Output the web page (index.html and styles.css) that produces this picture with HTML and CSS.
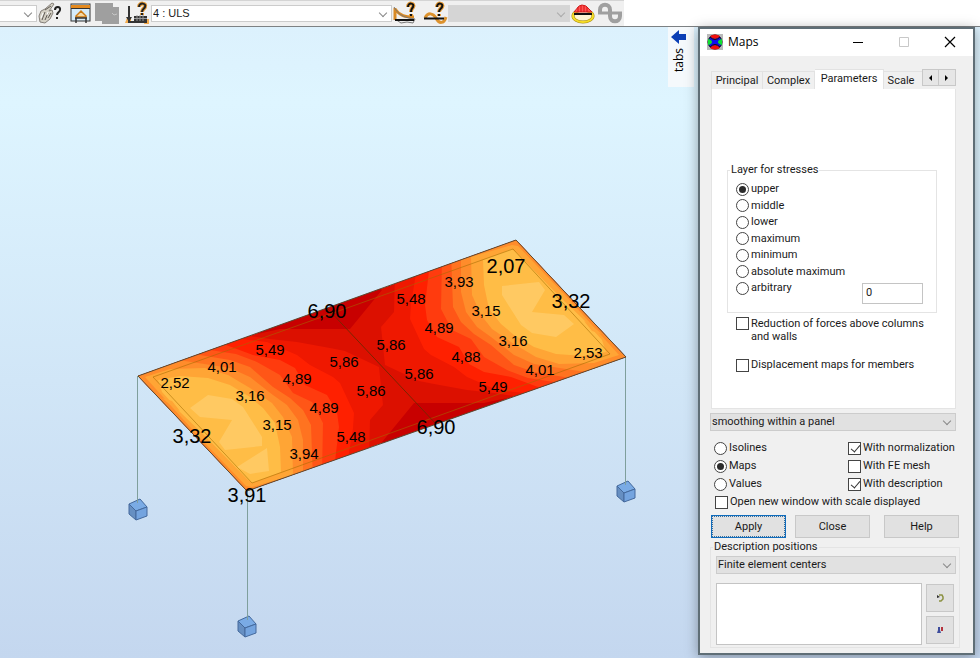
FILE: index.html
```html
<!DOCTYPE html>
<html lang="en">
<head>
    <meta charset="UTF-8">
    <meta name="viewport" content="width=device-width, initial-scale=1.0">
    <title>Maps</title>
    <link rel="stylesheet" href="styles.css">
</head>
<body>
    <header class="toolbar">
        <div class="tools">
            <div class="combo combo-selection">
                <select aria-label="Selection"><option></option></select>
            </div>
            <button class="tool" aria-label="Select objects">
                <svg width="26" height="24" viewBox="0 0 26 24">
                    <path d="M3 21 2 15l2-5 4-2 7-6 2 1-5 7 3-1 1 3-3 6-5 4z" fill="#d4d0c4" stroke="#85807a" stroke-width="1"/>
                    <path d="M5 19l3-8M8 19l3-7M11 17l3-5M8 9l6-4" stroke="#5f5a54" fill="none"/>
                    <path d="M4 17l2-5M10 14l1-3" stroke="#fff" fill="none"/>
                    <path d="M18 9c0-4 6-4 5 0 0 2-3 2-3 5M20 16v2" stroke="#222" stroke-width="2" fill="none"/>
                </svg>
            </button>
            <button class="tool" aria-label="View frame">
                <svg width="26" height="24" viewBox="0 0 26 24">
                    <rect x="3" y="3" width="19" height="17" fill="#d5ecfa" stroke="#333"/>
                    <path d="M3 4h19v3H3z" fill="#e58a1f"/>
                    <path d="M3 7.500h19" stroke="#333"/>
                    <path d="M8 16v-1l5-5 5 5v1z" fill="#f3d9a5" stroke="#cc7a14" stroke-width="1.500"/>
                    <path d="M7 17h12M8 17v5M18 17v5" stroke="#333" stroke-width="1.500"/>
                </svg>
            </button>
            <button class="tool" aria-label="Copy view" disabled>
                <svg width="26" height="24" viewBox="0 0 26 24">
                    <path d="M0 2h18v4h6v17H7v-3H0z" fill="#9f9f9f"/>
                    <path d="M17 12l2 2 3-1" stroke="#c5c5c5" fill="none"/>
                </svg>
            </button>
            <button class="tool tool-load" aria-label="Load case">
                <svg width="26" height="24" viewBox="0 0 26 24">
                    <path d="M2 17h4v5H0zM20 18h4v5h-5z" fill="#f3ab4b"/>
                    <path d="M4 5v15" stroke="#333" stroke-width="2"/>
                    <path d="M1 16l3 5 3-5z" fill="#333"/>
                    <path d="M3 21h19" stroke="#333" stroke-width="2"/>
                    <path d="M9 15h13v6H9z" fill="#333"/>
                    <path d="M9 17.500h13M12 14v6M15 14v6M18 14v6" stroke="#999"/>
                    <path d="M14 6c0-5 8-4 6 0-1 2-3 2-3 5M17 12v2" stroke="#e49a36" stroke-width="4" fill="none"/>
                    <path d="M14 6c0-5 8-4 6 0-1 2-3 2-3 5M17 12v2" stroke="#222" stroke-width="2" fill="none"/>
                </svg>
            </button>
            <div class="combo combo-case">
                <select aria-label="Load case"><option>4 : ULS</option></select>
            </div>
            <button class="tool" aria-label="Mode">
                <svg width="26" height="24" viewBox="0 0 26 24">
                    <path d="M3 7v12M3 8c5 7 10 8 19 8" stroke="#d98a25" stroke-width="3" fill="none"/>
                    <path d="M2 6c5 9 12 11 21 12M3 18l6 4 6-1 6 1 2-4" stroke="#777" fill="none"/>
                    <path d="M3 19h19" stroke="#111" stroke-width="2"/>
                    <path d="M16 6c0-5 7-4 5 0-1 2-2 2-2 5M19 13v2" stroke="#e49a36" stroke-width="4" fill="none"/>
                    <path d="M16 6c0-5 7-4 5 0-1 2-2 2-2 5M19 13v2" stroke="#111" stroke-width="2" fill="none"/>
                </svg>
            </button>
            <button class="tool tool-mode" aria-label="Mode shape">
                <svg width="26" height="24" viewBox="0 0 26 24">
                    <path d="M3 17c3-6 8-5 11 0 3 6 8 6 10-1" stroke="#dc922e" stroke-width="3" fill="none"/>
                    <path d="M2 17.500h20" stroke="#111" stroke-width="2"/>
                    <path d="M15 6c0-5 7-4 5 0-1 2-3 2-3 5M17 13v2" stroke="#e49a36" stroke-width="4" fill="none"/>
                    <path d="M15 6c0-5 7-4 5 0-1 2-3 2-3 5M17 13v2" stroke="#111" stroke-width="2" fill="none"/>
                </svg>
            </button>
            <div class="combo combo-mode">
                <select aria-label="Mode number" disabled><option></option></select>
            </div>
            <button class="tool" aria-label="Diagrams">
                <svg width="26" height="24" viewBox="0 0 26 24">
                    <ellipse cx="13" cy="15" rx="10" ry="6" fill="#fff6d5" stroke="#a48910" stroke-width="3"/>
                    <ellipse cx="13" cy="15" rx="10" ry="6" fill="none" stroke="#f5dc28" stroke-width="2"/>
                    <path d="M4 11l5-6 3-1 4 1 6 6z" fill="#f55" stroke="#c22"/>
                    <path d="M8 6v5M11 4v7M14 4v7M17 6v5" stroke="#d11"/>
                    <path d="M4 13h18" stroke="#111" stroke-width="2"/>
                </svg>
            </button>
            <button class="tool" aria-label="Deformation" disabled>
                <svg width="26" height="24" viewBox="0 0 26 24">
                    <path d="M3 12V9c0-7 10-7 10 0v6c0 7 10 7 10 0v-3" stroke="#9f9f9f" stroke-width="4" fill="none"/>
                    <path d="M1 12h10M15 12h10" stroke="#9f9f9f" stroke-width="3"/>
                </svg>
            </button>
        </div>
    </header>

    <main class="workspace">
        <svg class="model" viewBox="0 27 694 631" role="img" aria-label="Slab stress map">
            <defs>
                <clipPath id="slab"><path d="M138 376 516 240 626 357 247 491z"/></clipPath>
                <!-- one half of the stress map, the other half is the same turned by 180 degrees -->
                <g id="half">
                    <path fill="#c80000" d="M257 334 280 329 350 329 382 290 370 280z"/>
                    <path fill="#ef1800" d="M240 330 250 336 270 339 297 342 330 348 345 351 379 367 383 405 370 420 369 460 247 510 110 376z"/>
                    <path fill="#ff2000" d="M225 335 240 339 267 342 297 355 310 365 333 377 340 383 354 413 353 428 347 465 247 510 110 376z"/>
                    <path fill="#ff3b0e" d="M212 340 226 345 253 355 280 360 295 368 305 385 327 395 337 412 339 427 334 470 247 510 110 376z"/>
                    <path fill="#ff5617" d="M198 344 210 350 236 354 257 362 280 375 293 393 312 402 323 423 322 475 247 510 110 376z"/>
                    <path fill="#ff7320" d="M182 350 200 355 230 360 250 367 273 387 290 398 303 410 311 425 313 480 247 510 110 376z"/>
                    <path fill="#ff8c2b" d="M160 360 185 361 230 368 250 377 273 395 287 405 298 420 303 440 303 480 247 510 110 376z"/>
                    <path fill="#ffa535" d="M145 377 170 369 205 368 228 375 250 388 272 403 283 417 292 437 293 475 252 487 246 486 200 438z"/>
                    <path fill="#ffbd46" d="M158 380 180 376 208 378 230 385 250 397 263 408 275 423 280 447 281 472 252 483 247 479 207 438 180 412 162 392z"/>
                    <path fill="#ffa535" d="M162 398 172 401 180 411 173 407z"/>
                    <path fill="#ffc962" d="M190 408 208 395 232 399 243 407 262 437 262 446 225 450 219 442 232 420 200 417z"/>
                </g>
                <g id="support" stroke="#44699c" stroke-width="1" stroke-linejoin="round">
                    <path fill="#7aabe5" d="M-9-6 2-11 9-3-2 1z"/>
                    <path fill="#668fc2" d="M-9-6-2 1-2 10-9 4z"/>
                    <path fill="#74a4df" d="M-2 1 9-3 9 6-2 10z"/>
                </g>
            </defs>

            <use href="#support" x="138" y="510"/>
            <use href="#support" x="247" y="627"/>
            <use href="#support" x="626" y="492"/>
            <path class="column" d="M137.500 376v127M247.500 491v129M625.500 357v128"/>

            <g clip-path="url(#slab)">
                <path fill="#dc1000" d="M138 376 516 240 626 357 247 491z"/>
                <use href="#half"/>
                <use href="#half" transform="rotate(180 382 366)"/>
                <path fill="#ffc962" d="M237 467 267 448 269 471 250 474z"/>
            </g>
            <path class="outline" d="M138 376 516 240 626 357 247 491z"/>
            <path class="inner" d="M153 377 513 249 610 354 252 483z"/>
            <path class="joint" d="M327 308 436 424"/>

            <g class="extreme">
                <text x="506" y="273">2,07</text>
                <text x="571" y="308">3,32</text>
                <text x="327" y="318">6,90</text>
                <text x="436" y="434">6,90</text>
                <text x="192" y="443">3,32</text>
                <text x="247" y="502">3,91</text>
            </g>
            <g class="value">
                <text x="459" y="287">3,93</text>
                <text x="411" y="304">5,48</text>
                <text x="486" y="316">3,15</text>
                <text x="439" y="333">4,89</text>
                <text x="391" y="350">5,86</text>
                <text x="513" y="346">3,16</text>
                <text x="588" y="358">2,53</text>
                <text x="466" y="362">4,88</text>
                <text x="540" y="375">4,01</text>
                <text x="419" y="379">5,86</text>
                <text x="493" y="392">5,49</text>
                <text x="270" y="355">5,49</text>
                <text x="344" y="367">5,86</text>
                <text x="222" y="372">4,01</text>
                <text x="175" y="388">2,52</text>
                <text x="297" y="384">4,89</text>
                <text x="371" y="396">5,86</text>
                <text x="250" y="401">3,16</text>
                <text x="324" y="413">4,89</text>
                <text x="277" y="430">3,15</text>
                <text x="351" y="442">5,48</text>
                <text x="304" y="459">3,94</text>
            </g>
        </svg>

        <button class="side-tabs">
            <svg width="16" height="14" viewBox="0 0 16 14"><path d="M0 7l8-7v4h7v6H8v4z" fill="#0b3fb5"/></svg>
            <span>tabs</span>
        </button>

        <section class="dialog" aria-label="Maps">
            <div class="titlebar">
                <svg width="16" height="16" viewBox="0 0 16 16">
                    <path d="M0 0h16v16H0z" fill="#b9b9b9"/>
                    <circle cx="8" cy="8" r="7" fill="#1010f0" stroke="#111"/>
                    <path d="M3 2q5-3 10 0-2 3-5 3T3 2zM3 14q5 3 10 0-2-3-5-3t-5 3z" fill="#f01010"/>
                    <path d="M1 5q4 1 4 3t-4 3zM15 5q-4 1-4 3t4 3z" fill="#10e030"/>
                    <path d="M3 3q5 5 10 0M3 13q5-5 10 0" stroke="#111" fill="none"/>
                </svg>
                <h1>Maps</h1>
                <div class="window-buttons">
                    <button aria-label="Minimize"><svg width="12" height="12"><path d="M1 6.500h10" stroke="#000"/></svg></button>
                    <button aria-label="Maximize" disabled><svg width="12" height="12"><path d="M1.500 1.500h9v9h-9z" stroke="#c8c8c8" fill="none"/></svg></button>
                    <button aria-label="Close window"><svg width="12" height="12"><path d="M1 1l10 10M11 1 1 11" stroke="#000" stroke-width="1.200"/></svg></button>
                </div>
            </div>

            <div class="dialog-body">
                <div class="tabs" role="tablist">
                    <button class="tab tab-principal" role="tab">Principal</button>
                    <button class="tab tab-complex" role="tab">Complex</button>
                    <button class="tab active" role="tab" aria-selected="true">Parameters</button>
                    <button class="tab tab-scale" role="tab">Scale</button>
                    <div class="tab-scroll">
                        <button aria-label="Previous tabs"><svg width="4" height="6"><path d="M3 0v6L0 3z"/></svg></button>
                        <button aria-label="Next tabs"><svg width="4" height="6"><path d="M0 0v6l3-3z"/></svg></button>
                    </div>
                </div>

                <div class="pane">
                    <fieldset class="group layers">
                        <legend>Layer for stresses</legend>
                        <div class="layer-content">
                            <div class="layer-list">
                                <label><input type="radio" name="layer" checked>upper</label>
                                <label><input type="radio" name="layer">middle</label>
                                <label><input type="radio" name="layer">lower</label>
                                <label><input type="radio" name="layer">maximum</label>
                                <label><input type="radio" name="layer">minimum</label>
                                <label><input type="radio" name="layer">absolute maximum</label>
                                <label><input type="radio" name="layer">arbitrary</label>
                            </div>
                            <input class="arbitrary" type="text" value="0" aria-label="Arbitrary layer position">
                        </div>
                    </fieldset>
                    <div class="pane-options">
                        <label class="wrapped"><input type="checkbox"><span>Reduction of forces above columns and walls</span></label>
                        <label><input type="checkbox">Displacement maps for members</label>
                    </div>
                </div>

                <div class="combo smoothing">
                    <select aria-label="Smoothing"><option>smoothing within a panel</option></select>
                </div>

                <div class="display-options">
                    <label><input type="radio" name="display">Isolines</label>
                    <label><input type="checkbox" checked>With normalization</label>
                    <label><input type="radio" name="display" checked>Maps</label>
                    <label><input type="checkbox">With FE mesh</label>
                    <label><input type="radio" name="display">Values</label>
                    <label><input type="checkbox" checked>With description</label>
                    <label class="new-window"><input type="checkbox">Open new window with scale displayed</label>
                </div>

                <div class="actions">
                    <button class="btn primary">Apply</button>
                    <button class="btn">Close</button>
                    <button class="btn help">Help</button>
                </div>

                <fieldset class="group positions">
                    <legend>Description positions</legend>
                    <div class="combo">
                        <select aria-label="Description positions"><option>Finite element centers</option></select>
                    </div>
                    <div class="position-row">
                        <textarea aria-label="Positions"></textarea>
                        <div class="position-buttons">
                            <button class="btn" aria-label="Pick point">
                                <svg width="8" height="8"><path d="M1 1l3 2-3 1z" fill="#333"/><path d="M3 1h3l1 2v2L5 7H3" stroke="#8b9141" stroke-width="1.500" fill="none"/></svg>
                            </button>
                            <button class="btn" aria-label="Delete point">
                                <svg width="8" height="8"><path d="M2 1h2v3l1 3H1l1-3z" fill="#3d4c9c"/><path d="M5 1h2v4H5z" fill="#b5323c"/></svg>
                            </button>
                        </div>
                    </div>
                </fieldset>
            </div>
        </section>
    </main>
</body>
</html>
```

FILE: styles.css
```css
* {
    margin: 0;
    padding: 0;
    box-sizing: border-box;
}

body {
    display: flex;
    flex-direction: column;
    min-height: 100vh;
    font-family: Roboto, "Open Sans", sans-serif;
    font-size: 11px;
    line-height: 14px;
    color: #1a1a1a;
    background: #fff;
    overflow: hidden;
}

button,
input,
select,
textarea {
    font: inherit;
    color: inherit;
    border: none;
    border-radius: 0;
    background: none;
}

svg {
    display: block;
}

/* Toolbar */
.toolbar {
    border-bottom: 1px solid #7d8183;
}

.tools {
    display: flex;
    align-items: center;
    width: max-content;
    height: 26px;
    padding-bottom: 1px;
    background: #f0f0f0;
    border-top: 1px solid #d4d4d4;
}

.tool {
    width: 26px;
    height: 24px;
    margin-right: 1px;
}

.tool-load,
.tool-mode {
    margin-left: 3px;
    margin-right: 0;
}

.combo {
    position: relative;
}

.combo select {
    display: block;
    width: 100%;
    height: 18px;
    padding: 0 1px;
    appearance: none;
    background: #e1e1e1;
    border: 1px solid #cccccc;
}

.combo::after {
    content: "";
    position: absolute;
    right: 6px;
    top: 5px;
    width: 5px;
    height: 5px;
    border: solid #888;
    border-width: 0 1px 1px 0;
    transform: rotate(45deg);
    pointer-events: none;
}

.tools .combo select {
    height: 17px;
    font-family: "Liberation Sans", Arial, sans-serif;
    background: #fff;
}

.combo-selection {
    width: 37px;
}

.combo-selection select {
    border-left: none;
}

.combo-selection + .tool {
    margin-right: 5px;
}

.combo-case {
    width: 241px;
}

.combo-mode {
    width: 122px;
}

.tools .combo-mode select {
    background: #cbcbcb;
}

.combo-mode::after {
    border-color: #aaa;
}

/* Model view */
.workspace {
    position: relative;
    flex: 1;
    background: linear-gradient(#dcf1fd 0%, #def5ff 12%, #c4d7ef 100%);
}

.model {
    width: 694px;
    height: 631px;
}

.column {
    stroke: #7f9f9c;
    fill: none;
}

.outline {
    stroke: #5b4a33;
    stroke-width: 1;
    fill: none;
}

.inner {
    stroke: #a36b00;
    stroke-opacity: 0.55;
    fill: none;
}

.joint {
    stroke: #7a2500;
    fill: none;
}

.model text {
    font-family: "Liberation Sans", Arial, sans-serif;
    text-anchor: middle;
    fill: #000;
}

.extreme {
    font-size: 20px;
}

.value {
    font-size: 15px;
}

.side-tabs {
    position: absolute;
    top: 0;
    right: 286px;
    display: flex;
    flex-direction: column;
    align-items: center;
    gap: 4px;
    width: 26px;
    height: 60px;
    padding: 3px 4px 0 0;
    background: #f5f9fc;
}

.side-tabs span {
    font-family: "Open Sans", sans-serif;
    font-size: 12px;
    writing-mode: vertical-rl;
    transform: rotate(180deg);
    color: #000;
}

/* Dialog */
.dialog {
    position: absolute;
    top: 0;
    right: 5px;
    width: 277px;
    background: #f0f0f0;
    border: 2px solid #5f6e76;
    box-shadow: 0 2px 12px rgba(0, 0, 0, 0.35);
}

.titlebar {
    display: flex;
    align-items: center;
    gap: 5px;
    height: 27px;
    padding: 0 0 2px 7px;
    background: #fff;
}

.titlebar h1 {
    font-family: "Open Sans", sans-serif;
    font-size: 12px;
    font-weight: 400;
    color: #000;
}

.window-buttons {
    display: flex;
    margin-left: auto;
}

.window-buttons button {
    display: grid;
    place-items: center;
    width: 46px;
    height: 25px;
}

.dialog-body {
    padding: 13px 13px 5px 11px;
}

.tabs {
    display: flex;
    align-items: flex-end;
}

.tab {
    height: 18px;
    border: 1px solid #e2e2e2;
    border-width: 1px 1px 0 0;
}

.tab-principal {
    width: 52px;
    border-left-width: 1px;
}

.tab-complex {
    width: 52px;
}

.tab.active {
    width: 69px;
    height: 20px;
    padding-bottom: 2px;
    background: #fff;
}

.tab-scale {
    width: 38px;
    padding-right: 4px;
    border-right: none;
}

.tab-scroll {
    display: flex;
    align-self: flex-start;
}

.tab-scroll button {
    display: grid;
    place-items: center;
    width: 17px;
    height: 17px;
    background: #e6e6e6;
    border: 1px solid #c8c8c8;
}

.tab-scroll button + button {
    margin-left: -1px;
    width: 18px;
}

.pane {
    width: 245px;
    height: 320px;
    padding: 74px 18px 0 15px;
    background: #fff;
    border: 1px solid #e4e4e4;
    border-top: none;
}

.group {
    border: 1px solid #e4e4e4;
}

.group legend {
    margin-left: 2px;
    padding: 0 1px;
}

label {
    display: flex;
    align-items: center;
    gap: 2px;
    height: 16px;
    white-space: nowrap;
}

input[type="radio"],
input[type="checkbox"] {
    flex: none;
    position: relative;
    width: 13px;
    height: 13px;
    appearance: none;
    background: #fff;
    border: 1px solid #444;
}

input[type="radio"] {
    border-radius: 50%;
}

input[type="radio"]:checked::after {
    content: "";
    position: absolute;
    inset: 2px;
    border-radius: 50%;
    background: #2b2b2b;
}

input[type="checkbox"]:checked::after {
    content: "";
    position: absolute;
    left: 4px;
    top: 0;
    width: 4px;
    height: 8px;
    border: solid #333;
    border-width: 0 1px 1px 0;
    transform: rotate(40deg);
}

.layers {
    width: 210px;
    height: 150px;
}

.layer-content {
    display: flex;
    justify-content: space-between;
    padding: 4px 13px 0 8px;
}

.layer-list {
    display: flex;
    flex-direction: column;
    justify-content: space-between;
    height: 115px;
}

.arbitrary {
    align-self: flex-start;
    width: 61px;
    height: 21px;
    margin-top: 102px;
    padding: 0 3px 3px;
    background: #fff;
    border: 1px solid #c4c4c4;
}

.pane-options {
    padding: 4px 0 0 9px;
}

.wrapped {
    align-items: flex-start;
    width: 188px;
    height: 40px;
    line-height: 13px;
    white-space: normal;
}

.smoothing {
    width: 246px;
    margin: 4px 0 9px -1px;
}

.display-options {
    display: grid;
    grid-template-columns: 134px 1fr;
    row-gap: 2px;
    padding-left: 3px;
}

.new-window {
    grid-column: 1 / 3;
    padding-left: 1px;
}

.actions {
    display: flex;
    gap: 9px;
    width: 248px;
    margin: 5px 0 2px;
}

.btn {
    width: 75px;
    height: 23px;
    background: #e1e1e1;
    border: 1px solid #c8c8c8;
}

.help {
    margin-left: auto;
}

.primary {
    border: 1px solid #0f6cbd;
    outline: 1px dotted #3c6e98;
    outline-offset: -2px;
}

.positions {
    width: 250px;
    margin-left: -1px;
}

.positions .combo {
    margin: 2px 3px 0 5px;
}

.position-row {
    display: flex;
    gap: 4px;
    margin: 9px 3px 2px 5px;
}

.position-row textarea {
    flex: 1;
    height: 62px;
    resize: none;
    background: #fff;
    border: 1px solid #c4c4c4;
}

.position-buttons {
    display: flex;
    flex-direction: column;
    justify-content: space-between;
    padding: 1px 2px 1px 0;
}

.position-buttons .btn {
    display: grid;
    place-items: center;
    width: 28px;
    height: 28px;
}
```
